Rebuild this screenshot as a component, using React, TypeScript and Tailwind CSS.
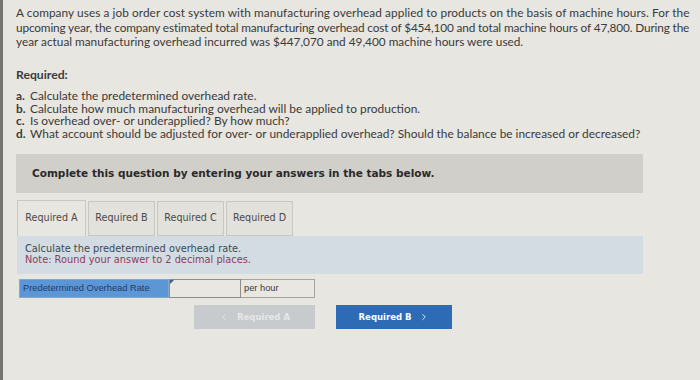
import React from 'react';
import { ChevronLeft, ChevronRight } from 'lucide-react';

const tabs = ['Required A', 'Required B', 'Required C', 'Required D'];

export default function App() {
  return (
    <div className="w-[700px] h-[380px] bg-[#e8e6e1] border-l-[3px] border-[#777470] overflow-hidden font-['Liberation_Sans',Arial,sans-serif] text-[#3c3c3c]">
      <div className="pl-[13px] pt-[6px] pr-2 font-['Lato','Open_Sans',sans-serif] whitespace-nowrap">
        <div className="text-[11.8px] leading-[14.5px] text-[#3a3a3a]">
          <p className="tracking-[0.08px]">
            A company uses a job order cost system with manufacturing overhead applied to products on the basis of machine hours. For the
          </p>
          <p className="tracking-[-0.14px]">
            upcoming year, the company estimated total manufacturing overhead cost of $454,100 and total machine hours of 47,800. During the
          </p>
          <p>year actual manufacturing overhead incurred was $447,070 and 49,400 machine hours were used.</p>
        </div>
        <p className="mt-[16px] text-[12.2px] font-bold text-[#3a3a3a]">Required:</p>
        <ul className="mt-[6px] text-[11.9px] leading-[12.8px] text-[#3a3a3a]">
          <li className="flex"><span className="w-[14px] font-bold">a.</span>Calculate the predetermined overhead rate.</li>
          <li className="flex"><span className="w-[14px] font-bold">b.</span>Calculate how much manufacturing overhead will be applied to production.</li>
          <li className="flex"><span className="w-[14px] font-bold">c.</span>Is overhead over- or underapplied? By how much?</li>
          <li className="flex"><span className="w-[14px] font-bold">d.</span>What account should be adjusted for over- or underapplied overhead? Should the balance be increased or decreased?</li>
        </ul>
      </div>

      <div className="ml-[13px] mt-[13px] w-[627px] h-[39px] bg-[#d1cfca] flex items-center pl-[16px]">
        <span className="font-['DejaVu_Sans',Verdana,sans-serif] font-bold text-[10.5px] text-[#2a2a2a]">
          Complete this question by entering your answers in the tabs below.
        </span>
      </div>

      <div className="ml-[14px] mt-[7px] w-[626px] font-['DejaVu_Sans',Verdana,sans-serif]">
        <div className="flex gap-[2px] items-end">
          {tabs.map((t, i) => (
            <div
              key={t}
              className={
                i === 0
                  ? 'h-[36px] w-[69px] flex items-center justify-center border border-[#c9c7c1] border-b-0 bg-[#e8e6e1] text-[9.6px] text-[#4a4a4a]'
                  : 'h-[35px] w-[67px] flex items-center justify-center border border-[#c9c7c1] bg-[#e3e1dc] text-[9.6px] text-[#4a4a4a]'
              }
            >
              {t}
            </div>
          ))}
        </div>
        <div className="h-[38px] bg-[#d2dce2] pl-[8px] pt-[7px] text-[9.8px] leading-[11px]">
          <div className="text-[#3d4954]">Calculate the predetermined overhead rate.</div>
          <div className="text-[#8c3d5c]">Note: Round your answer to 2 decimal places.</div>
        </div>
      </div>

      <div className="ml-[16px] mt-[5px] flex h-[19px] text-[9.3px]">
        <div className="w-[150px] bg-[#5c96d4] text-[#1f3d6e] flex items-center pl-[3px] border border-[#8aa7c6]">
          Predetermined Overhead Rate
        </div>
        <div className="relative w-[72px] bg-[#e9e7e2] border border-[#8f8d88]">
          <span className="absolute left-0 top-0 w-0 h-0 border-t-[4px] border-r-[4px] border-t-[#3d5f8a] border-r-transparent" />
        </div>
        <div className="w-[74px] bg-[#e9e7e2] border border-l-0 border-[#a6a49f] flex items-center pl-[3px] text-[#3a3a3a]">
          per hour
        </div>
      </div>

      <div className="flex mt-[7px] ml-[191px] gap-[21px] font-['DejaVu_Sans',Verdana,sans-serif]">
        <div className="w-[121px] h-[24px] bg-[#c8cbcd] flex items-center justify-center gap-[8px] text-[#e5e7e8] text-[8.5px] font-bold">
          <ChevronLeft size={10} strokeWidth={2} />
          <span>Required A</span>
        </div>
        <div className="w-[116px] h-[24px] bg-[#2d6cb5] flex items-center justify-center gap-[8px] text-white text-[8.5px] font-bold">
          <span>Required B</span>
          <ChevronRight size={10} strokeWidth={2} />
        </div>
      </div>
    </div>
  );
}
